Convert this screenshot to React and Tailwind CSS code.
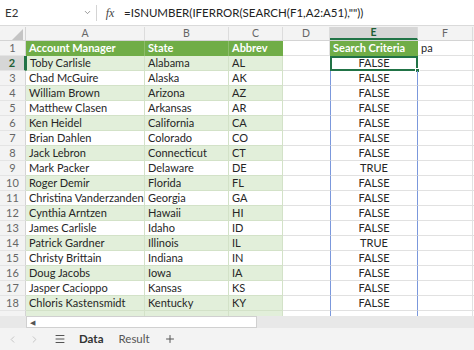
import React from "react";
import { ChevronDown, ChevronLeft, ChevronRight, Menu, Plus } from "lucide-react";

// sheet data: manager, state, abbrev, search result
const rows = [
  ["Toby Carlisle", "Alabama", "AL", "FALSE"],
  ["Chad McGuire", "Alaska", "AK", "FALSE"],
  ["William Brown", "Arizona", "AZ", "FALSE"],
  ["Matthew Clasen", "Arkansas", "AR", "FALSE"],
  ["Ken Heidel", "California", "CA", "FALSE"],
  ["Brian Dahlen", "Colorado", "CO", "FALSE"],
  ["Jack Lebron", "Connecticut", "CT", "FALSE"],
  ["Mark Packer", "Delaware", "DE", "TRUE"],
  ["Roger Demir", "Florida", "FL", "FALSE"],
  ["Christina Vanderzanden", "Georgia", "GA", "FALSE"],
  ["Cynthia Arntzen", "Hawaii", "HI", "FALSE"],
  ["James Carlisle", "Idaho", "ID", "FALSE"],
  ["Patrick Gardner", "Illinois", "IL", "TRUE"],
  ["Christy Brittain", "Indiana", "IN", "FALSE"],
  ["Doug Jacobs", "Iowa", "IA", "FALSE"],
  ["Jasper Cacioppo", "Kansas", "KS", "FALSE"],
  ["Chloris Kastensmidt", "Kentucky", "KY", "FALSE"],
];

const cols = [
  { key: "A", w: "w-[119px]" },
  { key: "B", w: "w-[84px]" },
  { key: "C", w: "w-[54px]" },
  { key: "D", w: "w-[47px]" },
  { key: "E", w: "w-[88px]" },
  { key: "F", w: "w-[55px]" },
];

function Corner() {
  return (
    <div className="w-[26px] h-[14px] shrink-0 flex items-end justify-end pr-[2px] pb-[1px] border-r border-[#d4d4d4]">
      <svg width="11" height="11" viewBox="0 0 11 11">
        <polygon points="0,11 11,11 11,0" fill="#c4c4c4" />
      </svg>
    </div>
  );
}

function RowNum({ n, active }) {
  return (
    <div
      className={`w-[26px] h-[15px] shrink-0 flex items-center justify-center text-[11px] border-b border-[#e4e4e4] ${
        active
          ? "bg-[#d6d6d6] text-[#1e5e35] font-bold border-r-2 border-r-[#217346]"
          : "bg-[#f3f3f3] text-[#666] border-r border-r-[#d4d4d4]"
      }`}
    >
      {n}
    </div>
  );
}

export default function App() {
  return (
    <div className="w-[474px] h-[350px] overflow-hidden bg-white font-['Lato','Noto_Sans',sans-serif] text-[11px] text-[#262626] flex flex-col">
      {/* formula bar */}
      <div className="h-[26px] flex items-center border-b border-[#dadada] bg-white">
        <div className="w-[96px] h-full flex items-center justify-between pl-[5px] pr-[4px]">
          <span className="text-[11.5px] text-[#333]">E2</span>
          <ChevronDown size={9} color="#777" strokeWidth={2} />
        </div>
        <div className="w-px h-[16px] bg-[#d4d4d4]" />
        <div className="w-[26px] flex items-center justify-center font-['Liberation_Serif',serif] italic text-[12px] text-[#444]">
          fx
        </div>
        <div className="pl-[1px] text-[11.5px] text-[#222] whitespace-nowrap">
          =ISNUMBER(IFERROR(SEARCH(F1,A2:A51),""))
        </div>
      </div>
      <div className="h-px bg-[#f3f3f3]" />

      {/* column headers */}
      <div className="flex h-[14px] bg-[#f3f3f3] border-b border-[#d4d4d4]">
        <Corner />
        {cols.map((c) => (
          <div
            key={c.key}
            className={`${c.w} shrink-0 flex items-center justify-center text-[10.5px] border-r border-[#dcdcdc] ${
              c.key === "E"
                ? "bg-[#d6d6d6] text-[#1e5e35] font-bold border-b-2 border-b-[#217346]"
                : "text-[#666]"
            }`}
          >
            {c.key}
          </div>
        ))}
        <div className="flex-1" />
      </div>

      {/* header row 1 */}
      <div className="flex h-[15px]">
        <RowNum n={1} />
        <div className="w-[119px] shrink-0 bg-[#70ad47] text-white font-bold pl-[3px] flex items-center border-r border-[#8cbd6b]">
          Account Manager
        </div>
        <div className="w-[84px] shrink-0 bg-[#70ad47] text-white font-bold pl-[3px] flex items-center border-r border-[#8cbd6b]">
          State
        </div>
        <div className="w-[54px] shrink-0 bg-[#70ad47] text-white font-bold pl-[3px] flex items-center">
          Abbrev
        </div>
        <div className="w-[47px] shrink-0 border-r border-b border-[#e1e1e1]" />
        <div className="w-[88px] shrink-0 bg-[#70ad47] text-white font-bold pl-[3px] flex items-center">
          Search Criteria
        </div>
        <div className="w-[55px] shrink-0 pl-[3px] flex items-center border-r border-b border-[#e1e1e1]">pa</div>
        <div className="flex-1 border-b border-[#e1e1e1]" />
      </div>

      {/* data rows */}
      {rows.map((r, i) => {
        const band = i % 2 === 0 ? "bg-[#e2efda]" : "bg-white";
        const active = i === 0;
        return (
          <div key={i} className="flex h-[15px]">
            <RowNum n={i + 2} active={active} />
            <div className={`w-[119px] shrink-0 ${band} pl-[3px] flex items-center whitespace-nowrap overflow-hidden border-r border-b border-[#d3e2c8] ${i === 0 ? "border-l border-l-[#217346]" : ""}`}>
              {r[0]}
            </div>
            <div className={`w-[84px] shrink-0 ${band} pl-[3px] flex items-center border-r border-b border-[#d3e2c8]`}>
              {r[1]}
            </div>
            <div className={`w-[54px] shrink-0 ${band} pl-[3px] flex items-center border-r border-b border-[#d3e2c8]`}>
              {r[2]}
            </div>
            <div className="w-[47px] shrink-0 border-b border-[#e1e1e1]" />
            <div
              className={`w-[88px] shrink-0 relative flex items-center justify-center ${
                active
                  ? "border-2 border-[#217346]"
                  : "border-x border-x-[#7b98dc] border-b border-b-[#e1e1e1]"
              }`}
            >
              {r[3]}
              {active && (
                <span className="absolute -right-[4px] -bottom-[4px] w-[5px] h-[5px] bg-[#217346] border border-white" />
              )}
            </div>
            <div className="w-[55px] shrink-0 border-r border-b border-[#e1e1e1]" />
            <div className="flex-1 border-b border-[#e1e1e1]" />
          </div>
        );
      })}

      {/* partial row 19 */}
      <div className="flex h-[5px] overflow-hidden">
        <div className="w-[26px] shrink-0 bg-[#f3f3f3] border-r border-[#d4d4d4]" />
        <div className="w-[119px] shrink-0 bg-[#e2efda] border-r border-[#d3e2c8]" />
        <div className="w-[84px] shrink-0 bg-[#e2efda] border-r border-[#d3e2c8]" />
        <div className="w-[54px] shrink-0 bg-[#e2efda] border-r border-[#d3e2c8]" />
        <div className="w-[47px] shrink-0" />
        <div className="w-[88px] shrink-0 border-x border-[#7b98dc]" />
        <div className="w-[55px] shrink-0 border-r border-[#e1e1e1]" />
      </div>

      {/* horizontal scrollbar */}
      <div className="h-[12px] flex bg-[#e8e8e8]">
        <div className="w-[26px] shrink-0" />
        <div className="w-[231px] h-full bg-white border border-[#d0d0d0] flex items-center pl-[3px]">
          <span className="text-[7px] text-[#555]">◀</span>
        </div>
      </div>

      {/* sheet tabs */}
      <div className="flex-1 flex items-center bg-[#f3f3f3] text-[11.5px]">
        <div className="w-[22px] flex justify-center pl-[2px]">
          <ChevronLeft size={11} color="#c2c2c2" />
        </div>
        <div className="w-[24px] flex justify-center">
          <ChevronRight size={11} color="#c2c2c2" />
        </div>
        <div className="w-[28px] flex justify-center">
          <Menu size={12} color="#555" />
        </div>
        <span className="font-bold text-[#333] ml-[5px]">Data</span>
        <span className="text-[#555] ml-[15px]">Result</span>
        <div className="ml-[14px]">
          <Plus size={12} color="#555" />
        </div>
      </div>
    </div>
  );
}
